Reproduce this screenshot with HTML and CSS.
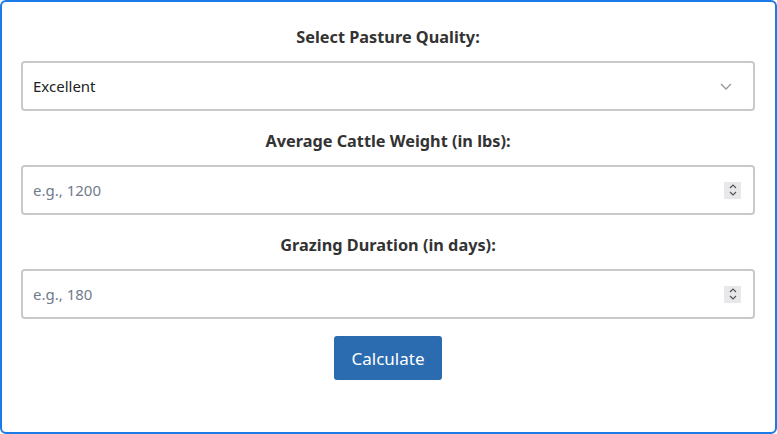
FILE: index.html
```html
<!DOCTYPE html>
<html lang="en">
<head>
  <meta charset="UTF-8" />
  <meta name="viewport" content="width=device-width, initial-scale=1.0"/>
  <title>Pasture Calculator</title>
  <link rel="stylesheet" href="styles.css">
</head>
<body>
  <div class="calc">
    <label for="quality">Select Pasture Quality:</label>
    <div class="field">
      <select id="quality">
        <option>Excellent</option>
        <option>Good</option>
        <option>Fair</option>
        <option>Poor</option>
      </select>
      <svg class="chev" width="14" height="14" viewBox="0 0 14 14"><path d="M2 5l5 5 5-5" fill="none" stroke="#999" stroke-width="1.4"/></svg>
    </div>

    <label for="weight">Average Cattle Weight (in lbs):</label>
    <div class="field">
      <input id="weight" type="text" placeholder="e.g., 1200" />
      <span class="spin">
        <svg width="10" height="16" viewBox="0 0 10 16"><path d="M2 6l3-3 3 3M2 10l3 3 3-3" fill="none" stroke="#555" stroke-width="1.2"/></svg>
      </span>
    </div>

    <label for="days">Grazing Duration (in days):</label>
    <div class="field last">
      <input id="days" type="text" placeholder="e.g., 180" />
      <span class="spin">
        <svg width="10" height="16" viewBox="0 0 10 16"><path d="M2 6l3-3 3 3M2 10l3 3 3-3" fill="none" stroke="#555" stroke-width="1.2"/></svg>
      </span>
    </div>

    <button class="btn">Calculate</button>
  </div>
</body>
</html>
```

FILE: styles.css
```css
html, body {
  margin: 0;
  height: 100%;
}
body {
  font-family: "Noto Sans", "Open Sans", sans-serif;
  background: #fff;
}
.calc {
  box-sizing: border-box;
  height: 434px;
  border: 2px solid #1a7ae6;
  border-radius: 6px;
  padding: 23px 20px 0 19px;
  display: flex;
  flex-direction: column;
}
.calc label {
  display: block;
  text-align: center;
  font-weight: bold;
  font-size: 16.3px;
  line-height: 24px;
  color: #333;
  margin-bottom: 12px;
}
.field {
  box-sizing: border-box;
  height: 50px;
  border: 2px solid #c9c9c9;
  border-radius: 4px;
  display: flex;
  align-items: center;
  padding: 0 10px;
  margin-bottom: 18px;
}
.field select,
.field input {
  flex: 1;
  border: none;
  outline: none;
  background: transparent;
  font-family: inherit;
  font-size: 15px;
  color: #222;
  padding: 0;
  appearance: none;
  -webkit-appearance: none;
}
.field input::placeholder {
  color: #6f7b8c;
}
.chev {
  margin-right: 10px;
}
.spin {
  width: 17px;
  height: 17px;
  background: #e8e8ea;
  display: flex;
  align-items: center;
  justify-content: center;
  margin-right: 2px;
}
.field.last {
  margin-bottom: 17px;
}
.btn {
  align-self: center;
  background: #2b6cb0;
  color: #fff;
  border: none;
  border-radius: 3px;
  padding: 0 18px;
  height: 44px;
  font-family: inherit;
  font-size: 17px;
  cursor: pointer;
}
```
